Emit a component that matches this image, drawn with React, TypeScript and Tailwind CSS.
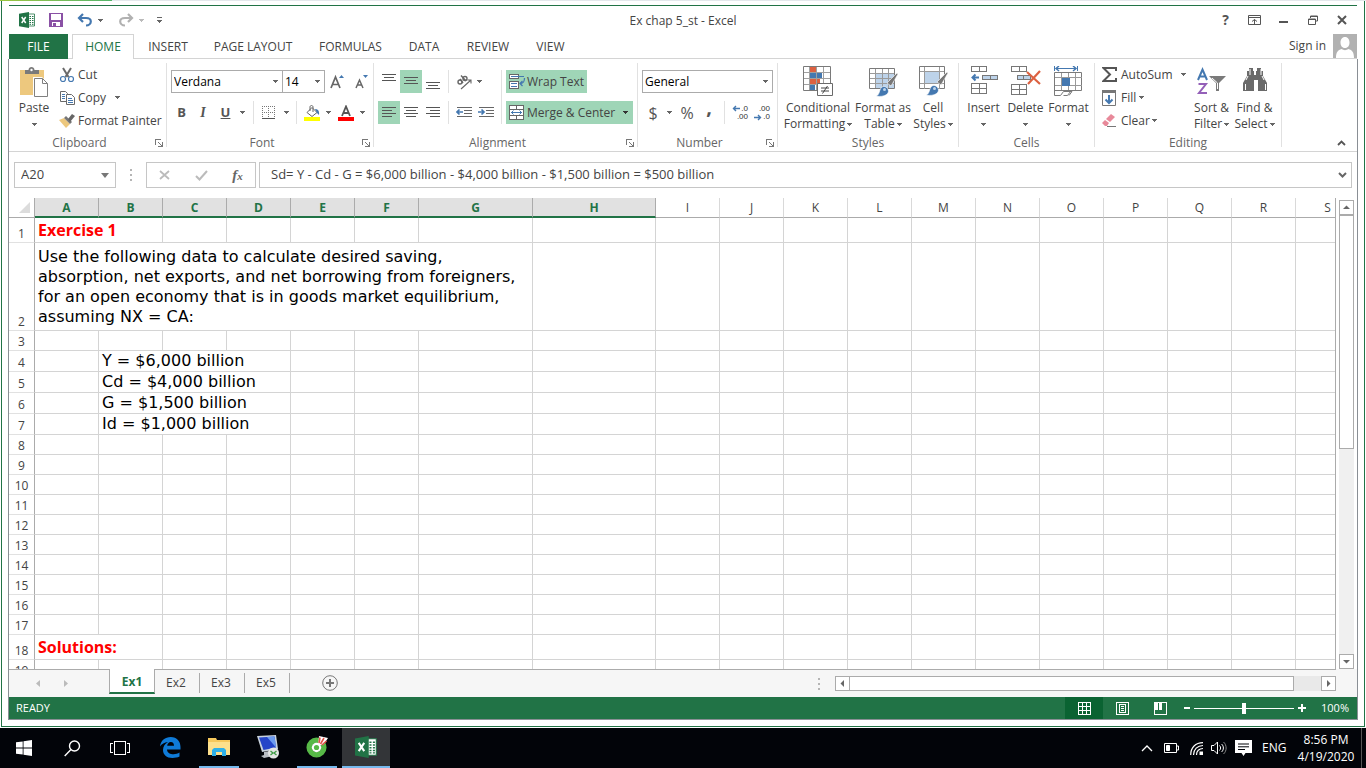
import { ReactNode } from "react";
import clsx from "clsx";

const Caret = ({ className = "text-[#666]" }: { className?: string }) => (
  <svg width="5" height="3" viewBox="0 0 5 3" className={clsx("shrink-0", className)} fill="currentColor" shapeRendering="crispEdges">
    <path d="M0 0h5v1H0zM1 1h3v1H1zM2 2h1v1H2z" />
  </svg>
);

const ExcelIcon = ({ size }: { size: number }) => (
  <svg width={size} height={size} viewBox="0 0 16 16">
    <path d="M9 2h6.500v12H9z" fill="#fff" stroke="#217346" strokeWidth=".8" />
    <path d="M10.500 4.500h1.500M13 4.500h1.500M10.500 6.500h1.500M13 6.500h1.500M10.500 8.500h1.500M13 8.500h1.500M10.500 10.500h1.500M13 10.500h1.500M10.500 12.300h1.500M13 12.300h1.500" stroke="#217346" />
    <path d="M0 1.800 10 0v16L0 14.200z" fill="#217346" />
    <path d="m2.700 5 4 6M6.700 5l-4 6" stroke="#fff" strokeWidth="1.500" />
  </svg>
);

const SaveIcon = () => (
  <svg width="14" height="14" viewBox="0 0 14 14" shapeRendering="crispEdges">
    <path d="M0 0h14v14H0z" fill="#8a51a5" />
    <path d="M2 1h10v6H2zM3 9h8v4H3z" fill="#fff" />
    <path d="M4 10h3v4H4z" fill="#8a51a5" />
  </svg>
);

const UndoIcon = ({ redo = false }: { redo?: boolean }) => (
  <svg width="16" height="14" viewBox="0 0 16 14" fill="none" stroke={redo ? "#b1b1b1" : "#4478b0"} strokeWidth="2.200">
    {redo ? (
      <path d="M10 1l4 4-4 4M14 5H7C4 5 2.200 6.500 2.200 8.500S4 12.500 7 12.500" />
    ) : (
      <path d="M6 1 2 5l4 4M2 5h7c3 0 4.800 1.500 4.800 3.500S12 12.500 9 12.500" />
    )}
  </svg>
);

const PasteIcon = () => (
  <svg width="32" height="32" viewBox="0 0 32 32">
    <path d="M2 4h24v25H2z" fill="#edc87e" />
    <path d="M7 8V4h3.500c0-4 6-4 6 0H21v4z" fill="#7a7a7a" />
    <circle cx="13.500" cy="4" r="1.200" fill="#fff" />
    <path d="M15 11h9l6 6v15H15z" fill="#fff" />
    <path d="M16.500 12.500h8l5 5v13h-13zM24.500 12.500v5h5" fill="#fff" stroke="#808080" />
  </svg>
);

const CutIcon = () => (
  <svg width="16" height="16" viewBox="0 0 16 16" fill="none">
    <path d="m4 1 5.500 9M12 1l-5.500 9" stroke="#6a6a6a" strokeWidth="2" />
    <circle cx="4" cy="12" r="2.500" stroke="#4478b0" strokeWidth="1.200" />
    <circle cx="12" cy="12" r="2.500" stroke="#4478b0" strokeWidth="1.200" />
  </svg>
);

const CopyIcon = () => (
  <svg width="16" height="16" viewBox="0 0 16 16" fill="#fff" stroke="#6a6a6a">
    <path d="M1.500 1.500h5l2 2v8h-7z" />
    <path d="M3 4.500h3M3 6.500h3M3 8.500h3" stroke="#4478b0" />
    <path d="M7.500 4.500h5l3 3v7h-8z" />
    <path d="M9 8.500h4M9 10.500h5M9 12.500h5" stroke="#4478b0" />
  </svg>
);

const BrushIcon = () => (
  <svg width="16" height="16" viewBox="0 0 16 16">
    <path d="M0 7 5 5l6 6-4 4z" fill="#edc87e" />
    <path d="m5 5 2-2 6 6-2 2z" fill="#777" />
    <path d="m9 6 4-5 3 2-5 6z" fill="#666" />
  </svg>
);

const GrowFont = ({ down = false }: { down?: boolean }) => (
  <svg width="16" height="16" viewBox="0 0 16 16" fill="none">
    {down ? (
      <>
        <path d="m2 14 3.500-8L9 14M3.500 11h4" stroke="#666" strokeWidth="1.500" />
        <path d="M9 1h5l-2.500 3z" fill="#4478b0" />
      </>
    ) : (
      <>
        <path d="m1 14 4.500-11L10 14M2.500 10.500h6" stroke="#666" strokeWidth="1.700" />
        <path d="M9 4h5l-2.500-3z" fill="#4478b0" />
      </>
    )}
  </svg>
);

const BordersIcon = () => (
  <svg width="14" height="14" viewBox="0 0 14 14" stroke="#777" shapeRendering="crispEdges">
    <path d="M0 .5h13M0 6.500h13M.5 0v12M6.500 0v12M12.500 0v12" strokeDasharray="1 1" />
    <path d="M0 12.500h13" stroke="#555" />
  </svg>
);

const FillIcon = () => (
  <svg width="16" height="16" viewBox="0 0 16 16" fill="none">
    <path d="m3 7.500 5-5 5 5-5 4z" stroke="#666" fill="#fff" />
    <path d="M6 6V2c0-2 3-2 3 0v5" stroke="#666" />
    <path d="M11 4c3 0 4.500 2 4 6l-2-2z" fill="#4478b0" />
    <path d="M0 12h16v4H0z" fill="#ff0" />
  </svg>
);

const FontColorIcon = () => (
  <svg width="16" height="16" viewBox="0 0 16 16" fill="none">
    <path d="m4 11 4-9.500L12 11M5.500 8h5" stroke="#555" strokeWidth="1.800" />
    <path d="M0 12h16v4H0z" fill="red" />
  </svg>
);

const LINE_PATHS = {
  top: "M1 1.500h14M3 4.500h10M1 7.500h14",
  middle: "M1 4.500h14M3 7.500h10M1 10.500h14",
  bottom: "M1 9.500h14M3 12.500h10M1 15.500h14",
  left: "M1 3.500h14M1 6.500h10M1 9.500h14M1 12.500h10",
  center: "M1 3.500h14M3 6.500h10M1 9.500h14M3 12.500h10",
  right: "M1 3.500h14M5 6.500h10M1 9.500h14M5 12.500h10",
};

const LinesIcon = ({ kind }: { kind: keyof typeof LINE_PATHS }) => (
  <svg width="16" height="17" viewBox="0 0 16 17" stroke="#555" shapeRendering="crispEdges">
    <path d={LINE_PATHS[kind]} />
  </svg>
);

const OrientationIcon = () => (
  <svg width="17" height="16" viewBox="0 0 17 16" fill="none" stroke="#666" strokeWidth="1.400">
    <circle cx="4" cy="8" r="2" />
    <path d="m4 5 3 4M5 1.500 10 7" />
    <circle cx="9" cy="4.500" r="2" />
    <path d="m5 15 10-9M11.500 6H15v3.500" strokeWidth="1.100" />
  </svg>
);

const IndentIcon = ({ increase = false }: { increase?: boolean }) => (
  <svg width="16" height="13" viewBox="0 0 16 13" fill="none">
    <path d="M1 1.500h15M8 4.500h8M8 7.500h8M1 10.500h15" stroke="#666" shapeRendering="crispEdges" />
    <path d="M0 3h7v6H0z" fill="#fff" />
    <path d={increase ? "M0 6h6M3.500 3.500 6 6 3.500 8.500" : "M7 6H1M3.500 3.500 1 6l2.500 2.500"} stroke="#4478b0" strokeWidth="1.700" />
  </svg>
);

const WrapIcon = () => (
  <svg width="17" height="17" viewBox="0 0 17 17" fill="none" className="shrink-0">
    <path d="M.5 1.500h9v4h-9zM.5 8.500h9v7h-9z" fill="#fff" stroke="#666" shapeRendering="crispEdges" />
    <path d="M2 3.500h13M2 10.500h6M2 13.500h6" stroke="#4478b0" shapeRendering="crispEdges" />
    <path d="M15.500 5c0 4-1 5-4 5.500M13.500 8 11 10.500l2.500 2.500" stroke="#4478b0" strokeWidth="1.300" />
  </svg>
);

const MergeIcon = () => (
  <svg width="15" height="15" viewBox="0 0 15 15" fill="none" className="shrink-0">
    <path d="M.5.5h14v14H.5zM.5 4.500h14M.5 10.500h14M7.500 0v4M7.500 11v4" fill="#fff" stroke="#666" shapeRendering="crispEdges" />
    <path d="M2 7.500h11M4.500 5.500l-2 2 2 2M10.500 5.500l2 2-2 2" stroke="#4478b0" />
  </svg>
);

const DecimalIcon = ({ increase = false }: { increase?: boolean }) => (
  <span className="relative flex w-4 flex-col font-['Liberation_Sans'] text-[8px] leading-2 text-[#333]">
    <span className="text-right">{increase ? ".0" : ".00"}</span>
    <span className="text-right">{increase ? ".00" : ".0"}</span>
    <svg width="8" height="7" viewBox="0 0 8 7" fill="none" stroke="#4478b0" strokeWidth="1.400" className={clsx("absolute left-0", increase ? "top-0" : "bottom-0")}>
      <path d={increase ? "M8 3.500H1.500M4 1 1.500 3.500 4 6" : "M0 3.500h6.500M4 1l2.500 2.500L4 6"} />
    </svg>
  </span>
);

const StylePen = () => (
  <>
    <path d="m29 8-7 12-4-3L28 7z" fill="#777" stroke="#fff" strokeWidth=".6" />
    <path d="M7 30c4-1 3-7 6-9 3-2 8 2 6 6-2 3-7 4-12 3z" fill="#4478b0" stroke="#fff" strokeWidth=".6" />
    <circle cx="15.500" cy="23.500" r="1.500" fill="#bdd3ea" />
  </>
);

const ConditionalIcon = () => (
  <svg width="32" height="32" viewBox="0 0 32 32">
    <path d="M1.500.5h27v24h-27z" fill="#fff" stroke="#7a7a7a" />
    <path d="M8 1h7v5H8zM8 13h10v6H8z" fill="#dc6141" />
    <path d="M8 7h12v5H8zM8 19h5v5H8z" fill="#4478b0" />
    <path d="M2 6.500h26M2 12.500h26M2 18.500h26M7.500 1v23M14.500 1v23M21.500 1v23" stroke="#a0a0a0" />
    <path d="M15.500 17.500h15v12h-15z" fill="#fff" stroke="#6a6a6a" />
    <path d="M19 22h8M19 25h8M25.500 20l-5 7.500" stroke="#444" />
  </svg>
);

const FormatTableIcon = () => (
  <svg width="32" height="32" viewBox="0 0 32 32">
    <path d="M2.500 2.500h25v20h-25z" fill="#fff" stroke="#7a7a7a" />
    <path d="M9 8h18v14H9z" fill="#bdd3ea" />
    <path d="M3 7.500h24M3 12.500h24M3 17.500h24M8.500 3v19M15.500 3v19M21.500 3v19" stroke="#9a9a9a" />
    <g transform="translate(2 0)"><StylePen /></g>
  </svg>
);

const CellStylesIcon = () => (
  <svg width="32" height="32" viewBox="0 0 32 32">
    <path d="M2.500.5h25v22h-25z" fill="#fff" stroke="#7a7a7a" />
    <path d="M3 5.500h24M3 17.500h24M7.500 1v22M22.500 1v22" stroke="#9a9a9a" />
    <path d="M8 6h14v11H8z" fill="#bdd3ea" />
    <g transform="translate(2 -1)"><StylePen /></g>
  </svg>
);

const InsertIcon = () => (
  <svg width="28" height="32" viewBox="0 0 28 32" fill="#fff" stroke="#777" shapeRendering="crispEdges">
    <path d="M1.500.5h15v5h-15zM9 .5v5M1.500 17.500h15v10h-15zM9 17v10M1.500 22.500h15" />
    <path d="M12.500 9.500h15v4h-15zM20 9v5" fill="#bdd3ea" />
    <path d="M9 11.500H3M5.500 8.500l-3 3 3 3" fill="none" stroke="#4478b0" strokeWidth="2" shapeRendering="auto" />
  </svg>
);

const DeleteIcon = () => (
  <svg width="30" height="32" viewBox="0 0 30 32" fill="#fff" stroke="#777" shapeRendering="crispEdges">
    <path d="M.5.5h15v5H.5zM8 .5v5M.5 18.500h15v10H.5zM8 18v10M.5 23.500h15" />
    <path d="M6.500 9.500h13v4h-13zM12.500 9v5" fill="#bdd3ea" />
    <path d="m16 6 13 12M29 5 17 18" fill="none" stroke="#dc6141" strokeWidth="2.200" shapeRendering="auto" />
  </svg>
);

const FormatIcon = () => (
  <svg width="29" height="32" viewBox="0 0 29 32" fill="none">
    <path d="M.5 0v5M23.500 0v5M3 2.500h18" stroke="#4478b0" shapeRendering="crispEdges" />
    <path d="M5 0 2 2.500 5 5M19 0l3 2.500L19 5" stroke="#4478b0" strokeWidth="1.500" />
    <path d="M.5 6.500h27v18H.5z" fill="#fff" stroke="#7a7a7a" />
    <path d="M1 11.500h27M1 19.500h27M7.500 7v17M14.500 7v17M21.500 7v17" stroke="#999" />
    <path d="M8 12h8v8H8z" fill="#4478b0" />
    <path d="M.5 24v5.500h6l3-4h7l-3 4h-4M16 25.500h2l-3 4" stroke="#7a7a7a" />
  </svg>
);

const SumIcon = () => (
  <svg width="15" height="15" viewBox="0 0 15 15" fill="none" stroke="#555" strokeWidth="2">
    <path d="M14 4V1H1.500L8 7.500 1.500 14H14v-3" />
  </svg>
);

const FillDownIcon = () => (
  <svg width="14" height="16" viewBox="0 0 14 16" fill="none">
    <path d="M.5.5h13v15H.5z" stroke="#777" fill="#fff" />
    <path d="M0 0h14v3H0z" fill="#777" />
    <path d="M7 5v8M3.500 9.500 7 13l3.500-3.500" stroke="#4478b0" strokeWidth="2" />
  </svg>
);

const EraserIcon = () => (
  <svg width="14" height="13" viewBox="0 0 14 13">
    <path d="m4 5 5-5 4 3-5 5z" fill="#e8899a" />
    <path d="m3 6 4 3-2 3H3L0 9z" fill="#e8899a" />
    <path d="M5 12.500h9" stroke="#777" />
  </svg>
);

const SortIcon = () => (
  <svg width="32" height="32" viewBox="0 0 32 32" fill="none">
    <path d="M2 14 6.500 3.500 11 14M3.500 10.500h6" stroke="#4478b0" strokeWidth="2" />
    <path d="M2.500 18H10L3 27h8" stroke="#9460b8" strokeWidth="2" />
    <path d="M13 10h17l-7 7v8h-3v-8z" fill="#7a7a7a" />
    <path d="m16 12 5.500 5v6" stroke="#fff" />
  </svg>
);

const FindIcon = () => (
  <svg width="26" height="24" viewBox="0 0 26 24" fill="#6a6a6a">
    <path d="M7 0h4v3h1v4h2V3h1V0h4v3h2v5l4 7v8h-9V12h-4v11H1v-8l4-7V3h2z" />
    <path d="M8 1v6M19 1v6M4 12l2-4M22 12l-2-4M3.500 16v6M23.500 16v6" stroke="#fff" fill="none" />
  </svg>
);

const Launcher = () => (
  <button aria-label="More options" className="flex w-4 shrink-0 justify-end pt-1 pr-[3px]">
    <svg width="8" height="8" viewBox="0 0 8 8" fill="none" stroke="#777" shapeRendering="crispEdges" className="shrink-0">
      <path d="M.5 6V.5H6M3.500 3.500 7 7M7.500 3v4.500H3" />
    </svg>
  </button>
);

interface GroupProps {
  label: string;
  width: string;
  launcher?: boolean;
  children: ReactNode;
}

const Group = ({ label, width, launcher = false, children }: GroupProps) => (
  <section aria-label={label} className={clsx("my-1 flex shrink-0 flex-col border-r border-[#e1e1e1]", width)}>
    <div className="flex h-[72px]">{children}</div>
    <div className="flex h-3 leading-4 text-[#666]">
      <span className="flex-1 text-center">{label}</span>
      {launcher && <Launcher />}
    </div>
  </section>
);

interface BigButtonProps {
  icon: ReactNode;
  lines: string[];
  width: string;
}

const BigButton = ({ icon, lines, width }: BigButtonProps) => (
  <button className={clsx("flex shrink-0 flex-col items-center pt-[3px] leading-4 whitespace-nowrap", width)}>
    <span className="mb-0.5 flex h-8 justify-center">{icon}</span>
    <span>{lines[0]}</span>
    <span className="flex h-4 items-center gap-0.5">
      {lines[1]}
      <Caret />
    </span>
  </button>
);

const SmallButton = ({ icon, label, caret = "" }: { icon: ReactNode; label: string; caret?: string }) => (
  <button className="flex h-[23px] items-center whitespace-nowrap">
    <span className="flex w-[19px] shrink-0">{icon}</span>
    {label}
    {caret && <span className={caret}><Caret /></span>}
  </button>
);

const Tool = ({ label, width = "w-[22px]", active = false, children }: { label: string; width?: string; active?: boolean; children: ReactNode }) => (
  <button aria-label={label} className={clsx("flex h-[23px] shrink-0 items-center justify-center", width, active && "bg-[#9fd5b7]")}>
    {children}
  </button>
);

const Divider = ({ className = "mx-1" }: { className?: string }) => <span className={clsx("h-[23px] w-px shrink-0 bg-[#e1e1e1]", className)} />;

const Combo = ({ label, value, width }: { label: string; value: string; width: string }) => (
  <span className={clsx("flex h-[23px] shrink-0 items-center border border-[#ababab] bg-white pr-1", width)}>
    <select aria-label={label} className="h-full min-w-0 flex-1 appearance-none bg-transparent pl-0.5 text-[12px] text-black outline-none">
      <option>{value}</option>
    </select>
    <Caret />
  </span>
);

const TitleBar = () => (
  <header className="grid h-[29px] grid-cols-[1fr_auto_1fr] items-center border-t border-[#217346]">
    <div className="flex items-center pl-[10px]">
      <ExcelIcon size={16} />
      <button aria-label="Save" className="ml-[14px]"><SaveIcon /></button>
      <button aria-label="Undo" className="ml-[14px] flex items-center gap-[5px]"><UndoIcon /><Caret /></button>
      <button aria-label="Redo" className="ml-[15px] flex items-center gap-[5px]"><UndoIcon redo /><Caret className="text-[#bbb]" /></button>
      <button aria-label="Customize toolbar" className="ml-[13px] flex flex-col gap-0.5">
        <span className="h-px w-[5px] bg-[#666]" />
        <Caret />
      </button>
    </div>
    <h1 className="pt-0.5 text-[12px]">Ex chap 5_st - Excel</h1>
    <div className="flex items-center justify-end pr-0.5 text-[#555]">
      <button aria-label="Help" className="w-[29px] text-[14px] leading-4 font-bold">?</button>
      <button aria-label="Ribbon display options" className="flex w-[29px] justify-center">
        <svg width="13" height="10" viewBox="0 0 13 10" fill="none" stroke="currentColor"><path d="M.5.5h12v9H.5zM.5 2.500h12M6.500 9V4.500M4 6.500l2.500-2L9 6.500" /></svg>
      </button>
      <button aria-label="Minimize" className="flex w-[29px] justify-center"><span className="mt-1 h-0.5 w-[9px] bg-[#555]" /></button>
      <button aria-label="Restore" className="flex w-[30px] justify-center">
        <svg width="10" height="10" viewBox="0 0 10 10" fill="none" stroke="currentColor"><path d="M2.500 3V1h7v5H8M.5 4h7v5.500h-7zM2.500 1.500h7M.5 4.500h7" /></svg>
      </button>
      <button aria-label="Close" className="flex w-[27px] justify-center">
        <svg width="10" height="10" viewBox="0 0 10 10" fill="none" stroke="currentColor" strokeWidth="2"><path d="m1 1 8 8M9 1 1 9" /></svg>
      </button>
    </div>
  </header>
);

const TABS = [
  { name: "INSERT", width: "w-[68px]" },
  { name: "PAGE LAYOUT", width: "w-[102px]" },
  { name: "FORMULAS", width: "w-[93px]" },
  { name: "DATA", width: "w-[54px]" },
  { name: "REVIEW", width: "w-[74px]" },
  { name: "VIEW", width: "w-[51px]" },
];

const RibbonTabs = () => (
  <nav className="flex h-[25px] border-b border-[#d4d4d4] text-[12px]">
    <button className="-mb-px w-[59px] bg-[#217346] text-white">FILE</button>
    <button className="-mb-px ml-1 w-[62px] border border-b-0 border-[#d4d4d4] bg-white text-[#217346]">HOME</button>
    {TABS.map((t) => (
      <button key={t.name} className={clsx("pt-0.5 whitespace-nowrap", t.width)}>{t.name}</button>
    ))}
    <button className="ml-auto flex items-center gap-[7px]">
      Sign in
      <svg width="24" height="24" viewBox="0 0 24 24">
        <path d="M0 0h24v24H0z" fill="#b1b1b1" />
        <path d="M12 3c3 0 4.500 2.500 4.500 5.500S15 14 12 14s-4.500-2.500-4.500-5.500S9 3 12 3zM3 24c0-6 2-8 5.500-9 2 1.500 5 1.500 7 0 3.500 1 5.500 3 5.500 9z" fill="#fff" />
      </svg>
    </button>
  </nav>
);

const Ribbon = () => (
  <div className="flex border-b border-[#d4d4d4] text-[12px]">
    <Group label="Clipboard" width="w-[158px]" launcher>
      <BigButton icon={<PasteIcon />} lines={["Paste", ""]} width="w-[50px]" />
      <div className="flex flex-col">
        <SmallButton icon={<CutIcon />} label="Cut" />
        <SmallButton icon={<CopyIcon />} label="Copy" caret="ml-[9px]" />
        <SmallButton icon={<BrushIcon />} label="Format Painter" />
      </div>
    </Group>

    <Group label="Font" width="w-[207px]" launcher>
      <div className="flex flex-col gap-2 pt-[7px] pl-1">
        <div className="flex">
          <Combo label="Font" value="Verdana" width="w-[112px]" />
          <Combo label="Font size" value="14" width="-ml-px w-[43px]" />
          <Tool label="Increase font size" width="w-[26px]"><GrowFont /></Tool>
          <Tool label="Decrease font size"><GrowFont down /></Tool>
        </div>
        <div className="flex items-center text-[13px] font-bold text-[#555]">
          <Tool label="Bold" width="w-[21px]">B</Tool>
          <Tool label="Italic"><i className="font-['Liberation_Serif'] text-[14px]">I</i></Tool>
          <Tool label="Underline" width="w-[23px]"><u>U</u></Tool>
          <Tool label="Underline style" width="w-[10px]"><Caret /></Tool>
          <Divider className="mr-2 ml-[6px]" />
          <Tool label="Borders" width="w-[14px]"><BordersIcon /></Tool>
          <Tool label="Border style" width="ml-1 w-[12px]"><Caret /></Tool>
          <Divider className="mr-[7px] ml-[4px]" />
          <Tool label="Fill color" width="w-4"><FillIcon /></Tool>
          <Tool label="Fill palette" width="ml-1 w-[9px]"><Caret /></Tool>
          <Tool label="Font color" width="ml-[5px] w-4"><FontColorIcon /></Tool>
          <Tool label="Font palette" width="ml-1 w-[9px]"><Caret /></Tool>
        </div>
      </div>
    </Group>

    <Group label="Alignment" width="w-[264px]" launcher>
      <div className="flex flex-col gap-2 pt-[7px] pl-1">
        <div className="flex">
          <Tool label="Top align"><LinesIcon kind="top" /></Tool>
          <Tool label="Middle align" active><LinesIcon kind="middle" /></Tool>
          <Tool label="Bottom align"><LinesIcon kind="bottom" /></Tool>
          <Divider />
          <Tool label="Orientation" width="w-[44px] gap-1 pr-3"><OrientationIcon /><Caret /></Tool>
        </div>
        <div className="flex">
          <Tool label="Align left" active><LinesIcon kind="left" /></Tool>
          <Tool label="Center"><LinesIcon kind="center" /></Tool>
          <Tool label="Align right"><LinesIcon kind="right" /></Tool>
          <Divider />
          <Tool label="Decrease indent"><IndentIcon /></Tool>
          <Tool label="Increase indent"><IndentIcon increase /></Tool>
        </div>
      </div>
      <span className="mx-1 mt-[7px] h-[54px] w-px bg-[#e1e1e1]" />
      <div className="flex flex-col items-start gap-2 pt-[7px]">
        <button className="flex h-[23px] w-[81px] items-center gap-px bg-[#9fd5b7] pl-[3px] whitespace-nowrap">
          <WrapIcon />Wrap Text
        </button>
        <button className="flex h-[23px] w-[127px] items-center gap-[3px] bg-[#9fd5b7] pr-[5px] pl-[3px] whitespace-nowrap">
          <MergeIcon />Merge &amp; Center
          <span className="ml-auto"><Caret className="text-[#333]" /></span>
        </button>
      </div>
    </Group>

    <Group label="Number" width="w-[140px]" launcher>
      <div className="flex flex-col gap-2 pt-[7px] pl-1">
        <Combo label="Number format" value="General" width="w-[131px]" />
        <div className="flex text-[16px] text-[#555]">
          <Tool label="Accounting format">$</Tool>
          <Tool label="Currency" width="ml-0.5 w-[6px]"><Caret /></Tool>
          <Tool label="Percent style" width="ml-1 w-[22px]">%</Tool>
          <Tool label="Comma style" width="w-[22px] pb-3 text-[20px] font-bold">,</Tool>
          <Divider />
          <Tool label="Increase decimal"><DecimalIcon increase /></Tool>
          <Tool label="Decrease decimal"><DecimalIcon /></Tool>
        </div>
      </div>
    </Group>

    <Group label="Styles" width="w-[181px]">
      <BigButton icon={<ConditionalIcon />} lines={["Conditional", "Formatting"]} width="ml-1 w-[72px]" />
      <BigButton icon={<FormatTableIcon />} lines={["Format as", "Table"]} width="w-[58px]" />
      <BigButton icon={<CellStylesIcon />} lines={["Cell", "Styles"]} width="w-[42px]" />
    </Group>

    <Group label="Cells" width="w-[136px]">
      <BigButton icon={<InsertIcon />} lines={["Insert", ""]} width="ml-1 w-[41px]" />
      <BigButton icon={<DeleteIcon />} lines={["Delete", ""]} width="w-[43px]" />
      <BigButton icon={<FormatIcon />} lines={["Format", ""]} width="w-[43px]" />
    </Group>

    <Group label="Editing" width="w-[187px]">
      <div className="flex w-[95px] flex-col pl-[7px]">
        <SmallButton icon={<SumIcon />} label="AutoSum" caret="ml-auto pr-1" />
        <SmallButton icon={<FillDownIcon />} label="Fill" caret="ml-[3px]" />
        <SmallButton icon={<EraserIcon />} label="Clear" caret="ml-0.5" />
      </div>
      <BigButton icon={<SortIcon />} lines={["Sort &", "Filter"]} width="w-[43px]" />
      <BigButton icon={<span className="pt-0.5"><FindIcon /></span>} lines={["Find &", "Select"]} width="w-[43px]" />
    </Group>

    <button aria-label="Collapse ribbon" className="mb-[5px] ml-auto self-end pr-[11px]">
      <svg width="9" height="6" viewBox="0 0 9 6" fill="none" stroke="#555" strokeWidth="1.800"><path d="m1 5 3.500-3.500L8 5" /></svg>
    </button>
  </div>
);

const Dots = () => (
  <span className="flex flex-col gap-[3px]">
    <span className="size-0.5 bg-[#b5b5b5]" />
    <span className="size-0.5 bg-[#b5b5b5]" />
    <span className="size-0.5 bg-[#b5b5b5]" />
  </span>
);

const FormulaBar = () => (
  <div className="flex px-[5px] pt-[10px] pb-[10px] text-[12px]">
    <div className="flex h-[26px] w-[102px] items-center border border-[#c6c6c6] pr-[6px]">
      <input aria-label="Name box" defaultValue="A20" className="min-w-0 flex-1 pl-[6px] text-[13px] outline-none" />
      <svg width="8" height="5" viewBox="0 0 8 5" fill="#777"><path d="M0 0h8L4 5z" /></svg>
    </div>
    <div className="flex w-[30px] items-center justify-center"><Dots /></div>
    <div className="flex h-[26px] w-[110px] items-center justify-around border border-[#c6c6c6]">
      <button aria-label="Cancel">
        <svg width="11" height="10" viewBox="0 0 11 10" stroke="#bbb" strokeWidth="1.800"><path d="m1 1 9 8M10 1 1 9" /></svg>
      </button>
      <button aria-label="Enter">
        <svg width="13" height="11" viewBox="0 0 13 11" fill="none" stroke="#bbb" strokeWidth="2"><path d="m1 6 3.500 3.500L12 1" /></svg>
      </button>
      <button aria-label="Insert function" className="font-['Liberation_Serif'] text-[15px] leading-4 font-bold text-[#666] italic">
        f<span className="text-[11px]">x</span>
      </button>
    </div>
    <div className="ml-[3px] flex h-[26px] flex-1 items-center border border-[#c6c6c6] pr-1">
      <input
        aria-label="Formula"
        defaultValue="Sd= Y - Cd - G = $6,000 billion - $4,000 billion - $1,500 billion = $500 billion"
        className="min-w-0 flex-1 pl-[11px] text-[13px] outline-none"
      />
      <svg width="9" height="6" viewBox="0 0 9 6" fill="none" stroke="#666" strokeWidth="2"><path d="m1 1 3.500 3.500L8 1" /></svg>
    </div>
  </div>
);

const COLUMNS = "ABCDEFGHIJKLMNOPQRS".split("");

interface Row {
  height: string;
  // text anchored at column `at`, running over `span` columns
  at?: number;
  span?: number;
  text?: string;
  heading?: boolean;
}

const blank: Row = { height: "h-5" };

const ROWS: Row[] = [
  { height: "h-[25px]", at: 0, span: 2, text: "Exercise 1", heading: true },
  {
    height: "h-[88px]",
    at: 0,
    span: 7,
    text: "Use the following data to calculate desired saving, absorption, net exports, and net borrowing from foreigners, for an open economy that is in goods market equilibrium, assuming NX = CA:",
  },
  blank,
  { height: "h-[21px]", at: 1, span: 3, text: "Y = $6,000 billion" },
  { height: "h-[21px]", at: 1, span: 3, text: "Cd = $4,000 billion" },
  { height: "h-[21px]", at: 1, span: 3, text: "G = $1,500 billion" },
  { height: "h-[21px]", at: 1, span: 3, text: "Id = $1,000 billion" },
  ...Array<Row>(10).fill(blank),
  { height: "h-[25px]", at: 0, span: 2, text: "Solutions:", heading: true },
  blank,
];

const SheetRow = ({ row, number }: { row: Row; number: number }) => {
  const cells: ReactNode[] = [];
  for (let c = 0; c < COLUMNS.length; c++) {
    if (c === row.at) {
      cells.push(
        <td
          key={c}
          colSpan={row.span}
          className={clsx(
            "border-r border-b border-[#d4d4d4] pl-[3px] text-left align-middle leading-5",
            row.heading ? "text-[16px] font-bold text-[#f00]" : "font-['DejaVu_Sans'] text-[16px] text-black",
          )}
        >
          {row.text}
        </td>,
      );
      c += (row.span ?? 1) - 1;
    } else {
      cells.push(<td key={c} className="border-r border-b border-[#d4d4d4]" />);
    }
  }
  return (
    <tr className={row.height}>
      <th className="border-r border-b border-r-[#ababab] border-b-[#e1e1e1] align-bottom text-[12px] leading-4 font-normal">{number}</th>
      {cells}
    </tr>
  );
};

const Sheet = () => (
  <div className="min-w-0 flex-1 overflow-hidden border-r border-[#ababab]">
    <table className="w-[1351px] table-fixed border-separate border-spacing-0">
      <colgroup>
        <col className="w-[26px]" />
        {COLUMNS.map((c) => (
          <col key={c} className={c === "G" ? "w-[114px]" : c === "H" ? "w-[123px]" : "w-[64px]"} />
        ))}
      </colgroup>
      <thead>
        <tr className="h-5 text-[12px] leading-[17px]">
          <th aria-label="Select all" className="border-r border-b border-[#ababab] p-0">
            <svg width="11" height="11" viewBox="0 0 11 11" fill="#dcdcdc" className="ml-[10px]"><path d="M11 0v11H0z" /></svg>
          </th>
          {COLUMNS.map((c, i) => (
            <th
              key={c}
              className={clsx(
                "border-r p-0",
                i < 8
                  ? "border-b-2 border-r-[#ababab] border-b-[#217346] bg-[#e1e1e1] text-[#217346]"
                  : "border-b border-r-[#d9d9d9] border-b-[#ababab] font-normal",
              )}
            >
              {c}
            </th>
          ))}
        </tr>
      </thead>
      <tbody>
        {ROWS.map((row, i) => (
          <SheetRow key={i} row={row} number={i + 1} />
        ))}
      </tbody>
    </table>
  </div>
);

const ScrollButton = ({ label, path }: { label: string; path: string }) => (
  <button aria-label={label} className="flex size-[15px] shrink-0 items-center justify-center border border-[#ababab] bg-white">
    <svg width="7" height="7" viewBox="0 0 7 7" fill="#666"><path d={path} /></svg>
  </button>
);

const VerticalScroll = () => (
  <div className="flex w-[21px] flex-col items-center pt-0.5">
    <ScrollButton label="Scroll up" path="M0 5h7L3.500 1.500z" />
    <span className="w-[15px] grow-[234] border border-[#ababab] bg-white" />
    <span className="w-[15px] grow-[206] bg-[#f0f0f0]" />
    <ScrollButton label="Scroll down" path="M0 2h7L3.500 5.500z" />
  </div>
);

const SheetTabs = () => (
  <div className="flex h-7 items-start bg-[#f6f6f6] text-[12px]">
    <div className="flex h-full min-w-0 flex-1 items-start border-t border-[#ababab]">
      <div className="flex h-[26px] w-[100px] items-center gap-6 pl-[27px]">
        <button aria-label="Previous sheet"><svg width="4" height="7" viewBox="0 0 4 7" fill="#bbb"><path d="M4 0v7L0 3.500z" /></svg></button>
        <button aria-label="Next sheet"><svg width="4" height="7" viewBox="0 0 4 7" fill="#bbb"><path d="M0 0v7l4-3.500z" /></svg></button>
      </div>
      <button className="-mt-px h-[25px] w-[46px] border-r border-b-2 border-l border-r-[#ababab] border-b-[#217346] border-l-[#ababab] bg-white pt-0.5 font-bold text-[#217346]">Ex1</button>
      {["Ex2", "Ex3", "Ex5"].map((name) => (
        <button key={name} className="mt-[3px] h-5 w-[45px] border-r border-[#ababab] pr-0.5">{name}</button>
      ))}
      <button aria-label="New sheet" className="mt-[5px] ml-[32px]">
        <svg width="16" height="16" viewBox="0 0 16 16" fill="none" stroke="#777"><circle cx="8" cy="8" r="7.300" /><path d="M8 4v8M4 8h8" strokeWidth="2" /></svg>
      </button>
      <div className="mt-[6px] ml-auto flex items-center gap-[15px]">
        <Dots />
        <div className="flex w-[501px] bg-[#e9e9e9]">
          <ScrollButton label="Scroll left" path="M5 0v7L1.500 3.500z" />
          <span className="-ml-px grow-[444] border border-[#ababab] bg-white" />
          <span className="grow-[27]" />
          <ScrollButton label="Scroll right" path="M2 0v7l3.500-3.500z" />
        </div>
      </div>
    </div>
    <span className="w-[21px] shrink-0" />
  </div>
);

const StatusBar = () => (
  <footer className="flex h-[22px] items-center bg-[#217346] pr-[8px] pl-[7px] text-[11px] text-white">
    <span>READY</span>
    <button aria-label="Normal view" className="ml-auto flex h-full w-[38px] items-center justify-center bg-[#0a6332]">
      <svg width="13" height="13" viewBox="0 0 13 13" fill="none" stroke="#fff" shapeRendering="crispEdges"><path d="M.5.5h12v12H.5zM4.500 0v13M8.500 0v13M0 4.500h13M0 8.500h13" /></svg>
    </button>
    <button aria-label="Page layout view" className="flex w-[38px] justify-center">
      <svg width="13" height="13" viewBox="0 0 13 13" fill="none" stroke="#fff" shapeRendering="crispEdges"><path d="M.5.5h12v12H.5zM3.500 2.500h6v8h-6zM5 4.500h3M5 6.500h3M5 8.500h3" /></svg>
    </button>
    <button aria-label="Page break preview" className="flex w-[38px] justify-center">
      <svg width="13" height="13" viewBox="0 0 13 13" fill="none" stroke="#fff" shapeRendering="crispEdges"><path d="M.5.5h12v12H.5z" /><path d="M1 1h3v7H1zM5 1h3v7H5z" fill="#fff" stroke="none" /></svg>
    </button>
    <button aria-label="Zoom out" className="ml-[5px]"><span className="block h-0.5 w-[6px] bg-white" /></button>
    <input
      aria-label="Zoom"
      type="range"
      defaultValue={50}
      className="mx-[4px] h-[11px] w-[100px] appearance-none bg-transparent [&::-webkit-slider-runnable-track]:h-px [&::-webkit-slider-runnable-track]:bg-white [&::-webkit-slider-thumb]:-mt-[5px] [&::-webkit-slider-thumb]:h-[11px] [&::-webkit-slider-thumb]:w-1 [&::-webkit-slider-thumb]:appearance-none [&::-webkit-slider-thumb]:bg-white"
    />
    <button aria-label="Zoom in">
      <svg width="8" height="8" viewBox="0 0 8 8" stroke="#fff" strokeWidth="2"><path d="M4 0v8M0 4h8" /></svg>
    </button>
    <span className="w-[43px] text-right">100%</span>
  </footer>
);

const TaskItem = ({ label, bar = "w-[49px] border-transparent", children }: { label: string; bar?: string; children: ReactNode }) => (
  <button aria-label={label} className={clsx("flex h-10 items-center justify-center border-b-2", bar)}>
    {children}
  </button>
);

const Taskbar = () => (
  <footer className="flex h-10 shrink-0 items-center bg-[#020409] text-[12px] text-white">
    <button aria-label="Start" className="flex w-12 justify-center">
      <svg width="16" height="16" viewBox="0 0 16 16" fill="#fff"><path d="M0 2.300 6.700 1.400v6.200H0zM7.500 1.300 16 0v7.600H7.500zM0 8.400h6.700v6.200L0 13.700zM7.500 8.400H16V16l-8.500-1.300z" /></svg>
    </button>
    <button aria-label="Search" className="flex w-12 justify-center">
      <svg width="17" height="17" viewBox="0 0 17 17" fill="none" stroke="#fff" strokeWidth="1.400"><circle cx="10.500" cy="6" r="5" /><path d="M7 9.500.7 16" /></svg>
    </button>
    <button aria-label="Task view" className="flex w-12 justify-center">
      <svg width="20" height="14" viewBox="0 0 20 14" fill="none" stroke="#fff" shapeRendering="crispEdges"><path d="M4.500.5h11v13h-11zM3 2.500H.5v9H3M17 2.500h2.500v9H17" /></svg>
    </button>
    <span className="w-0.5" />
    <TaskItem label="Edge">
      <svg width="21" height="21" viewBox="0 0 21 21" fill="#0f7bd8">
        <path d="M0 9.500C.7 3.500 5 0 10.800 0 17 0 20.500 4.500 20.500 10v2.500H7c.2 3.500 3.400 4.700 6.500 4.700 2.300 0 4.300-.6 6-1.600v4c-2 1-4.400 1.400-7 1.400C6.500 21 3 17.500 3 13c0-3.500 2-6.500 5-8-3.500.3-6.500 2-8 4.500zM7.200 8.700h6.800C14 6.500 13 5 10.800 5 8.700 5 7.400 6.800 7.200 8.700z" />
      </svg>
    </TaskItem>
    <TaskItem label="File Explorer" bar="mx-1 w-10 border-[#76b9ed]">
      <svg width="22" height="20" viewBox="0 0 22 20">
        <path d="M0 1h8l1 2h13v15H0z" fill="#f6c85c" />
        <path d="M0 5h22v13H0z" fill="#fde08c" />
        <path d="M4 19v-6l2-2h10l2 2v6h-4v-4H8v4z" fill="#2fb0e8" />
      </svg>
    </TaskItem>
    <TaskItem label="Remote Desktop">
      <svg width="24" height="24" viewBox="0 0 24 24">
        <path d="m8 17 6-1v4l3 1-9 2-3-2 3-1z" fill="#b9bec4" />
        <path d="m1 1 19-1 2 14-16 3z" fill="#c8d2dc" />
        <path d="m3 2.500 15.500-1L20 12.500 7.500 15z" fill="#2545c8" />
        <path d="m11 2 7.500-.5L20 12.500z" fill="#6b9bf0" />
        <circle cx="17.500" cy="18" r="5.500" fill="#e4e6e4" />
        <path d="m14.500 16 2.500 2-2.500 2M20.500 16 18 18l2.500 2" fill="none" stroke="#3f9c46" strokeWidth="1.300" />
      </svg>
    </TaskItem>
    <TaskItem label="Coc Coc" bar="mx-[5px] w-10 border-[#76b9ed]">
      <svg width="22" height="22" viewBox="0 0 22 22" fill="none">
        <circle cx="10.500" cy="11.500" r="7.300" stroke="#57b947" strokeWidth="5.500" />
        <path d="M12 10 13 0l9 2-4 6z" fill="#fff" />
        <circle cx="10.500" cy="11.500" r="4.700" fill="#fff" />
        <circle cx="10.500" cy="11.500" r="2.600" fill="#57b947" />
        <path d="M14 1.500 13 7M18 2l-3.500 6M20.500 5 16 9" stroke="#e0524a" strokeWidth="1.600" />
      </svg>
    </TaskItem>
    <TaskItem label="Excel" bar="w-12 border-[#76b9ed] bg-[#333538]">
      <ExcelIcon size={22} />
    </TaskItem>

    <div className="ml-auto flex h-full items-center">
      <button aria-label="Show hidden icons" className="mr-[11px]">
        <svg width="12" height="7" viewBox="0 0 12 7" fill="none" stroke="#fff" strokeWidth="1.300"><path d="m1 6 5-5 5 5" /></svg>
      </button>
      <svg width="15" height="10" viewBox="0 0 15 10" fill="none" stroke="#fff" className="mr-[11px]"><path d="M.5.5h12v9H.5zM13 3h1.500v4H13" /><path d="M2.500 2.500h3v5h-3z" fill="#fff" /></svg>
      <svg width="13" height="13" viewBox="0 0 13 13" fill="none" stroke="#fff" strokeWidth="1.200" className="mr-2">
        <path d="M.7 13C.7 5.500 5.500.7 13 .7M3.500 13C3.500 7.500 7.500 3.500 13 3.500M6.500 13c0-4 2.500-6.500 6.500-6.500" />
        <path d="M9.500 9.500H13V13H9.500z" fill="#fff" stroke="none" />
      </svg>
      <svg width="16" height="14" viewBox="0 0 16 14" fill="none" stroke="#fff" className="mr-2">
        <path d="M.5 4.500H3l3.500-3.500v12L3 9.500H.5zM8.500 4.500c1.500 1.500 1.500 3.500 0 5M10.500 3c2.500 2 2.500 6 0 8" />
        <path d="M12.500 1c3.500 3 3.500 9 0 12" stroke="#888" />
      </svg>
      <svg width="17" height="17" viewBox="0 0 17 17" className="mr-[10px]">
        <path d="M0 0h17v13h-6.500L8.500 16l-2-3H0z" fill="#fff" />
        <path d="M3 4h11M3 6.800h11M3 9.500h7" stroke="#020409" />
      </svg>
      <span className="w-[25px]">ENG</span>
      <time className="w-[78px] text-center leading-[17px]">
        8:56 PM
        <br />
        4/19/2020
      </time>
      <span className="mr-1 ml-[-4px] h-full w-px bg-[#555]" />
    </div>
  </footer>
);

const App = () => (
  <div className="flex h-screen flex-col overflow-hidden bg-white font-['Open_Sans','Noto_Sans',sans-serif] text-[#444]">
    <div className="flex h-px shrink-0 bg-[#e4e8ec]">
      <span className="w-28 bg-linear-to-r from-[#9bc53d] to-[#52b56a]" />
    </div>
    <main className="mx-px mb-px flex min-h-0 flex-1 flex-col border-x border-b border-[#217346] px-[7px] pt-1 pb-[6px]">
      <TitleBar />
      <RibbonTabs />
      <div className="-mx-px flex min-h-0 flex-1 flex-col border-x border-b border-[#8a8f95]">
        <Ribbon />
        <FormulaBar />
        <div className="flex min-h-0 flex-1">
          <Sheet />
          <VerticalScroll />
        </div>
        <SheetTabs />
        <StatusBar />
      </div>
    </main>
    <Taskbar />
  </div>
);

export default App;
